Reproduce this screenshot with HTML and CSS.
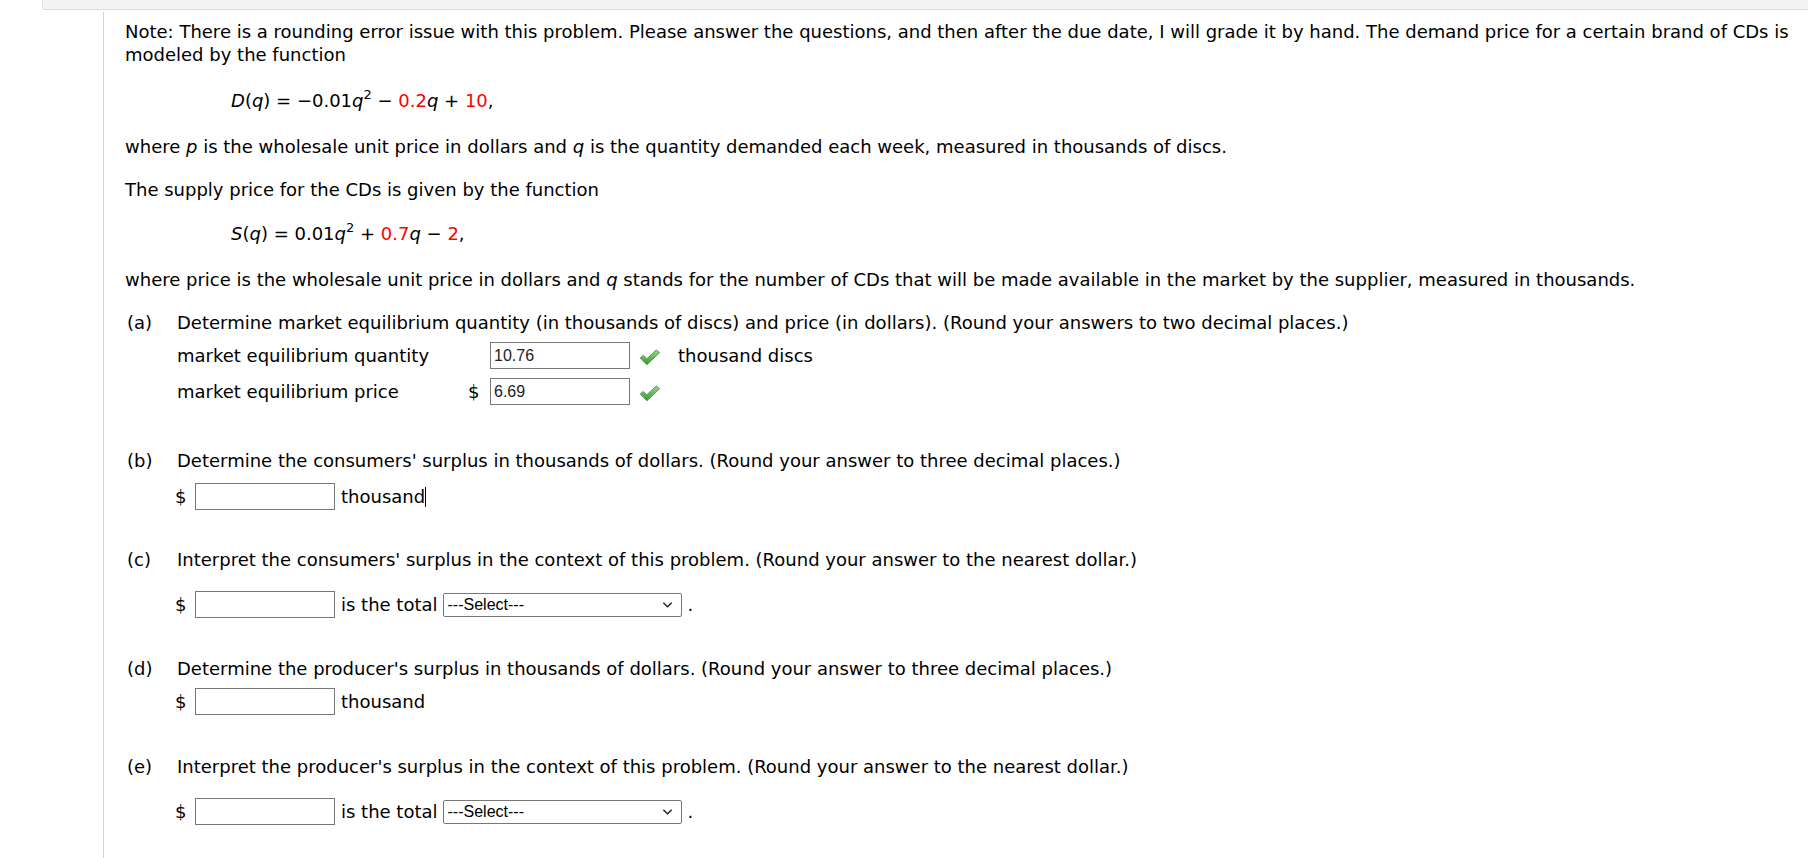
FILE: index.html
```html
<!DOCTYPE html>
<html>
<head>
<meta charset="utf-8">
<link rel="stylesheet" href="styles.css">
</head>
<body>
<div class="topbar"></div>
<div class="frame">
  <div class="content">
    <p class="para first">Note: There is a rounding error issue with this problem. Please answer the questions, and then after the due date, I will grade it by hand. The demand price for a certain brand of CDs is modeled by the function</p>
    <div class="eq"><i>D</i>(<i>q</i>) = &minus;0.01<i>q</i><sup>2</sup> &minus; <span class="red">0.2</span><i>q</i> + <span class="red">10</span>,</div>
    <p class="para">where <i>p</i> is the wholesale unit price in dollars and <i>q</i> is the quantity demanded each week, measured in thousands of discs.</p>
    <p class="para second">The supply price for the CDs is given by the function</p>
    <div class="eq"><i>S</i>(<i>q</i>) = 0.01<i>q</i><sup>2</sup> + <span class="red">0.7</span><i>q</i> &minus; <span class="red">2</span>,</div>
    <p class="para">where price is the wholesale unit price in dollars and <i>q</i> stands for the number of CDs that will be made available in the market by the supplier, measured in thousands.</p>

    <div class="part part-a">
      <span class="label">(a)</span>
      <div class="body">
        <div class="q">Determine market equilibrium quantity (in thousands of discs) and price (in dollars). (Round your answers to two decimal places.)</div>
        <div class="ansgrid">
          <span class="rowlabel">market equilibrium quantity</span>
          <span class="cur"></span>
          <span class="box filled">10.76</span>
          <svg class="check" viewBox="0 0 22 17"><defs><linearGradient id="g1" x1="0" y1="0" x2="0" y2="1"><stop offset="0" stop-color="#9ad88a"/><stop offset="0.55" stop-color="#62b456"/><stop offset="1" stop-color="#3b8f35"/></linearGradient></defs><path d="M1.2 9 L4.2 6.4 L7.8 9.8 L17.2 1 L20.6 3.6 L7.9 15.8 Z" fill="url(#g1)" stroke="#4b9843" stroke-width="0.9" stroke-linejoin="round"/></svg>
          <span class="unit">thousand discs</span>

          <span class="rowlabel">market equilibrium price</span>
          <span class="cur">$</span>
          <span class="box filled">6.69</span>
          <svg class="check" viewBox="0 0 22 17"><defs><linearGradient id="g2" x1="0" y1="0" x2="0" y2="1"><stop offset="0" stop-color="#9ad88a"/><stop offset="0.55" stop-color="#62b456"/><stop offset="1" stop-color="#3b8f35"/></linearGradient></defs><path d="M1.2 9 L4.2 6.4 L7.8 9.8 L17.2 1 L20.6 3.6 L7.9 15.8 Z" fill="url(#g2)" stroke="#4b9843" stroke-width="0.9" stroke-linejoin="round"/></svg>
          <span class="unit"></span>
        </div>
      </div>
    </div>

    <div class="part part-b">
      <span class="label">(b)</span>
      <div class="body">
        <div class="q">Determine the consumers' surplus in thousands of dollars. (Round your answer to three decimal places.)</div>
        <div class="ansrow short">
          <span class="cur2">$</span>
          <span class="box"></span>
          <span class="unit2">thousand<span class="caret"></span></span>
        </div>
      </div>
    </div>

    <div class="part part-c">
      <span class="label">(c)</span>
      <div class="body">
        <div class="q">Interpret the consumers' surplus in the context of this problem. (Round your answer to the nearest dollar.)</div>
        <div class="ansrow tall">
          <span class="cur2">$</span>
          <span class="box"></span>
          <span class="unit2">is the total</span>
          <span class="select">---Select---<svg class="chev" viewBox="0 0 12 8"><path d="M1.5 1.5 L6 6 L10.5 1.5" fill="none" stroke="#222" stroke-width="1.6"/></svg></span>
          <span class="dot">.</span>
        </div>
      </div>
    </div>

    <div class="part part-d">
      <span class="label">(d)</span>
      <div class="body">
        <div class="q">Determine the producer's surplus in thousands of dollars. (Round your answer to three decimal places.)</div>
        <div class="ansrow short">
          <span class="cur2">$</span>
          <span class="box"></span>
          <span class="unit2">thousand</span>
        </div>
      </div>
    </div>

    <div class="part part-e">
      <span class="label">(e)</span>
      <div class="body">
        <div class="q">Interpret the producer's surplus in the context of this problem. (Round your answer to the nearest dollar.)</div>
        <div class="ansrow tall">
          <span class="cur2">$</span>
          <span class="box"></span>
          <span class="unit2">is the total</span>
          <span class="select">---Select---<svg class="chev" viewBox="0 0 12 8"><path d="M1.5 1.5 L6 6 L10.5 1.5" fill="none" stroke="#222" stroke-width="1.6"/></svg></span>
          <span class="dot">.</span>
        </div>
      </div>
    </div>
  </div>
</div>
</body>
</html>
```
FILE: styles.css
```css
html, body {
  margin: 0;
  padding: 0;
  background: #fff;
  overflow: hidden;
}
body {
  font-family: "DejaVu Sans", Verdana, sans-serif;
  font-size: 18px;
  color: #000;
  line-height: 23px;
}
.topbar {
  margin-left: 42px;
  height: 9px;
  background: #f4f4f4;
  border-left: 1px solid #e2e2e2;
  border-bottom: 1px solid #dcdcdc;
  border-bottom-left-radius: 3px;
}
.frame {
  margin-left: 103px;
  margin-top: 2px;
  border-left: 1px solid #d4d4d4;
  height: 846px;
}
.content {
  padding: 8px 0 0 21px;
  width: 1680px;
}
.para {
  margin: 0 0 20px 0;
}
.para.first {
  margin-bottom: 23px;
}
.para.second {
  margin-bottom: 21px;
}
.eq {
  margin: 0 0 23px 106px;
}
.eq sup {
  font-size: 13px;
  line-height: 0;
  vertical-align: 8px;
}
.red { color: #ff0000; }
i { font-style: italic; }

.part {
  display: flex;
}
.label {
  width: 52px;
  padding-left: 2px;
  box-sizing: border-box;
  flex: none;
}
.body { flex: 1; }
.q { margin-bottom: 8px; }

.ansgrid {
  display: grid;
  grid-template-columns: 291px 22px 141px 47px auto;
  row-gap: 9px;
  align-items: center;
}
.box {
  display: block;
  width: 140px;
  height: 27px;
  box-sizing: border-box;
  border: 1px solid #777;
  font-family: "Liberation Sans", Arial, sans-serif;
  font-size: 16px;
  line-height: 25px;
  padding-left: 3px;
  color: #222;
}
.check {
  width: 22px;
  height: 17px;
  margin-left: 8px;
  margin-top: 3px;
}
.part-a { margin-bottom: 44px; }
.part-b { margin-bottom: 38px; }
.part-c { margin-bottom: 39px; }
.part-d { margin-bottom: 40px; }

.ansrow {
  display: flex;
  align-items: center;
  margin-left: -2px;
}
.part-b .ansrow { margin-top: 11px; }
.ansrow.tall { margin-top: 20px; }
.cur2 { width: 20px; }
.unit2 { margin-left: 6px; }
.caret {
  display: inline-block;
  width: 1px;
  height: 20px;
  background: #000;
  vertical-align: -4px;
}
.select {
  display: flex;
  align-items: center;
  justify-content: space-between;
  margin-left: 5px;
  width: 239px;
  height: 24px;
  box-sizing: border-box;
  border: 1px solid #777;
  border-radius: 2px;
  font-family: "Liberation Sans", Arial, sans-serif;
  font-size: 16px;
  padding: 0 8px 0 4px;
  color: #000;
}
.chev { width: 11px; height: 8px; }
.dot { margin-left: 6px; }
```
